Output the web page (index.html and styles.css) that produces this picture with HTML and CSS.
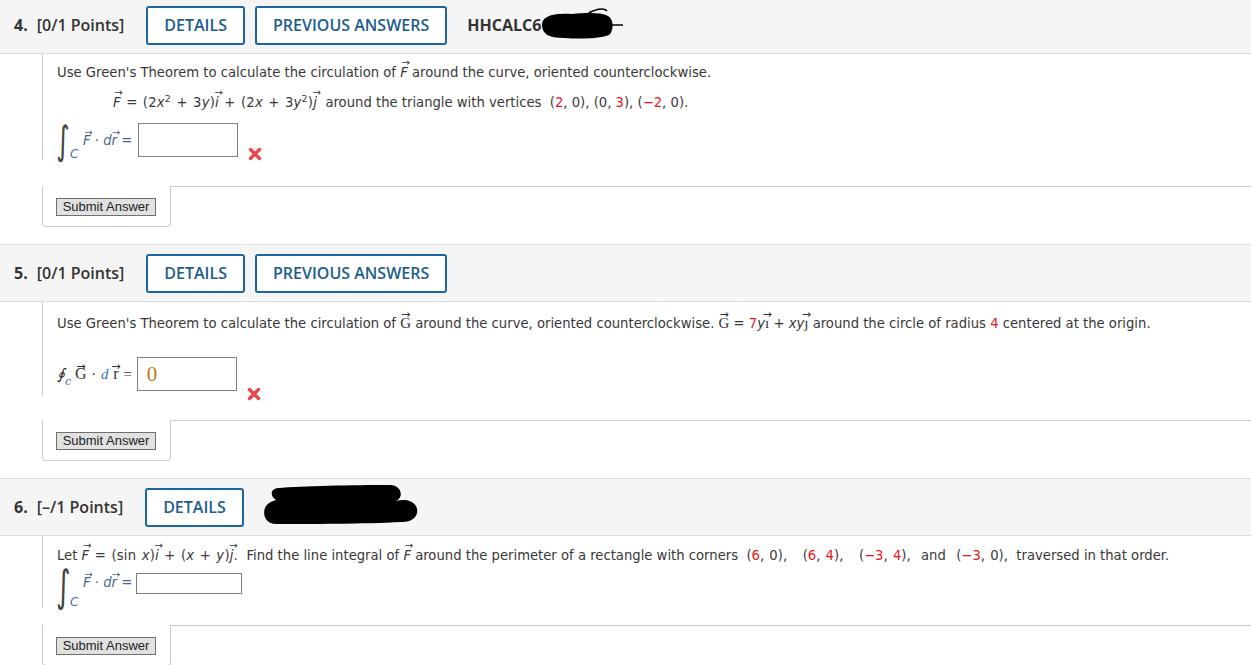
FILE: index.html
```html
<!DOCTYPE html>
<html>
<head>
<meta charset="utf-8">
<title>Questions</title>
<link rel="stylesheet" href="styles.css">
</head>
<body>
<div class="page">

  <section class="q">
    <div class="qhead">
      <span class="qnum">4.</span><span class="pts">[0/1 Points]</span>
      <span class="btn">DETAILS</span>
      <span class="btn">PREVIOUS ANSWERS</span>
      <span class="code">HHCALC6</span>
      <svg class="redact1" width="84" height="34" viewBox="0 0 84 34">
        <path d="M2,18 C2,8 16,6 32,7 C46,6 60,5 68,9 C74,12 74,24 69,28 C58,32 40,32 24,31 C9,31 2,27 2,18 Z" fill="#000"/>
        <path d="M66,18 L83,18" stroke="#000" stroke-width="1.5"/>
        <path d="M46,8 C54,2 64,0 67,4" stroke="#000" stroke-width="1.5" fill="none"/>
      </svg>
    </div>
    <div class="qbody">
      <div class="content c4">
        <p class="line1">Use Green's Theorem to calculate the circulation of <span class="v it">F</span> around the curve, oriented counterclockwise.</p>
        <p class="line2"><span class="m"><span class="v it">F</span> = (2<i>x</i><sup>2</sup> + 3<i>y</i>)<span class="v it">i</span> + (2<i>x</i> + 3<i>y</i><sup>2</sup>)<span class="v it">j</span></span> &nbsp;around the triangle with vertices &nbsp;(<span class="red">2</span>, 0), (0, <span class="red">3</span>), (<span class="red">−2</span>, 0).</p>
        <div class="ans ans4">
          <span class="intg"><span class="isym">∫</span><span class="isub">C</span></span>
          <span class="expr"><span class="v it">F</span> · <i>d</i><span class="v it">r</span> =</span>
          <span class="box b4"></span>
          <svg class="xmark" width="14" height="14" viewBox="0 0 14 14"><path d="M2.5,2.5 L11.5,11.5 M11.5,2.5 L2.5,11.5" stroke="#e8474c" stroke-width="3.4" stroke-linecap="round"/></svg>
        </div>
      </div>
      <div class="foot">
        <div class="subcell"><button class="submit">Submit Answer</button></div>
        <div class="rest"></div>
      </div>
    </div>
  </section>

  <section class="q">
    <div class="qhead">
      <span class="qnum">5.</span><span class="pts">[0/1 Points]</span>
      <span class="btn">DETAILS</span>
      <span class="btn">PREVIOUS ANSWERS</span>
    </div>
    <div class="qbody">
      <div class="content c5">
        <p class="line1">Use Green's Theorem to calculate the circulation of <span class="sv">G</span> around the curve, oriented counterclockwise. <span class="sv">G</span> = <span class="red">7</span><i>y</i><span class="sv">ı</span> + <i>xy</i><span class="sv">ȷ</span> around the circle of radius <span class="red">4</span> centered at the origin.</p>
        <div class="ans ans5">
          <span class="oint">∮<span class="csub">c</span></span>
          <span class="serif"><span class="sv">G</span> · <i class="blue">d</i> <span class="sv">r</span> =</span>
          <span class="box b5"><span class="val">0</span></span>
          <svg class="xmark" width="14" height="14" viewBox="0 0 14 14"><path d="M2.5,2.5 L11.5,11.5 M11.5,2.5 L2.5,11.5" stroke="#e8474c" stroke-width="3.4" stroke-linecap="round"/></svg>
        </div>
      </div>
      <div class="foot">
        <div class="subcell"><button class="submit">Submit Answer</button></div>
        <div class="rest"></div>
      </div>
    </div>
  </section>

  <section class="q">
    <div class="qhead">
      <span class="qnum">6.</span><span class="pts">[–/1 Points]</span>
      <span class="btn">DETAILS</span>
      <svg class="redact2" width="158" height="42" viewBox="0 0 158 42">
        <path d="M16,4 C40,2 90,1 128,1 C140,1 142,14 134,17 C142,15 150,16 154,22 C158,30 152,38 140,38 C100,40 50,40 14,40 C2,40 0,28 4,22 C6,19 10,17 14,16 C8,12 8,5 16,4 Z" fill="#000"/>
      </svg>
    </div>
    <div class="qbody">
      <div class="content c6">
        <p class="line1">Let <span class="m"><span class="v it">F</span> = (sin <i>x</i>)<span class="v it">i</span> + (<i>x</i> + <i>y</i>)<span class="v it">j</span>.</span> &nbsp;Find the line integral of <span class="v it">F</span> around the perimeter of a rectangle with corners &nbsp;<span class="m2">(<span class="red">6</span>, 0), &nbsp; (<span class="red">6</span>, <span class="red">4</span>), &nbsp; (<span class="red">−3</span>, <span class="red">4</span>), &nbsp;and &nbsp;(<span class="red">−3</span>, 0),</span> &nbsp;traversed in that order.</p>
        <div class="ans ans6">
          <span class="intg tall"><span class="isym">∫</span><span class="isub">C</span></span>
          <span class="expr"><span class="v it">F</span> · <i>d</i><span class="v it">r</span> =</span>
          <span class="box b6"></span>
        </div>
      </div>
      <div class="foot">
        <div class="subcell"><button class="submit">Submit Answer</button></div>
        <div class="rest"></div>
      </div>
    </div>
  </section>

</div>
</body>
</html>
```

FILE: styles.css
```css
html, body {
  margin: 0;
  padding: 0;
  background: #ffffff;
}

body {
  font-family: "DejaVu Sans", Verdana, sans-serif;
  color: #383838;
}

.page {
  margin-top: -4px;
}

.q + .q {
  margin-top: 17px;
}

/* ---------- header bar ---------- */
.qhead {
  display: flex;
  align-items: center;
  height: 56px;
  background: #f5f5f5;
  border-top: 1px solid #dedede;
  border-bottom: 1px solid #dedede;
  padding-left: 14px;
  font-family: "Open Sans", "Noto Sans", sans-serif;
  color: #333;
}

.qnum {
  font-size: 16px;
  font-weight: 700;
  margin-right: 9px;
}

.pts {
  font-size: 16px;
  font-weight: 600;
  margin-right: 22px;
}

.btn {
  display: flex;
  align-items: center;
  box-sizing: border-box;
  height: 39px;
  padding: 0 16px;
  border: 2px solid #1b66a0;
  border-radius: 3px;
  background: #ffffff;
  color: #1d5d8e;
  font-size: 16px;
  font-weight: 600;
  margin-right: 10px;
}

.code {
  margin-left: 10px;
  font-size: 16px;
  font-weight: 700;
  color: #333;
}

.redact1 {
  margin-left: -1px;
  margin-top: -2px;
}

.redact2 {
  margin-left: 8px;
  margin-top: -4px;
}

/* ---------- body ---------- */
.qbody {
  margin-left: 42px;
}

.content {
  border-left: 1px solid #cccccc;
  padding-left: 14px;
  font-size: 13.2px;
}

.content p {
  margin: 0;
}

.m {
  letter-spacing: 0.2px;
  word-spacing: 1px;
}

.m2 {
  word-spacing: 1px;
}

.c4 {
  padding-top: 9px;
}

.c4 .line1 {
  line-height: 20px;
}

.c4 .line2 {
  margin-top: 10px;
  padding-left: 56px;
  line-height: 20px;
}

.c5 {
  padding-top: 11px;
}

.c5 .line1 {
  line-height: 20px;
}

.c6 {
  padding-top: 10px;
}

.c6 .line1 {
  line-height: 20px;
}

i, .it {
  font-style: italic;
}

sup {
  font-size: 9.5px;
  line-height: 0;
  vertical-align: 5px;
}

.red {
  color: #e8161b;
}

/* vector arrow over a sans letter */
.v {
  position: relative;
  display: inline-block;
}

.v::after {
  content: "\2192";
  position: absolute;
  left: 50%;
  top: -5px;
  transform: translateX(-30%);
  font-size: 10px;
  font-style: normal;
  letter-spacing: 0;
  line-height: 1;
}

/* serif vector letters */
.sv {
  position: relative;
  display: inline-block;
  font-family: "Liberation Serif", "DejaVu Serif", serif;
  font-size: 15px;
  font-style: normal;
  color: #333;
}

.sv::after {
  content: "\2192";
  position: absolute;
  left: 50%;
  top: -4px;
  transform: translateX(-50%);
  font-family: "DejaVu Sans", sans-serif;
  font-size: 11px;
  line-height: 1;
}

/* ---------- answer rows ---------- */
.ans {
  display: flex;
  align-items: center;
}

.ans4 {
  margin-top: 7px;
  height: 40px;
}

.intg {
  position: relative;
  display: inline-block;
  width: 26px;
  height: 36px;
  flex: none;
}

.isym {
  position: absolute;
  left: -1px;
  top: 50%;
  font-family: "DejaVu Sans", sans-serif;
  font-size: 26px;
  line-height: 1;
  color: #444;
  transform: translateY(-50%) scaleY(1.5);
}

.isub {
  position: absolute;
  left: 13px;
  bottom: -2px;
  font-size: 12px;
  font-style: italic;
  color: #3e6fa3;
  line-height: 1;
}

.expr {
  margin-right: 6px;
  color: #4a6788;
  font-size: 13.2px;
}

.box {
  display: inline-block;
  box-sizing: border-box;
  border: 1px solid #808080;
  background: #fff;
  flex: none;
}

.b4 {
  width: 100px;
  height: 34px;
}

.xmark {
  align-self: flex-start;
  margin-top: 27px;
  margin-left: 10px;
}

.ans5 {
  margin-top: 18px;
  height: 44px;
}

.ans5 .xmark {
  margin-top: 35px;
}

.oint {
  position: relative;
  display: inline-block;
  width: 16px;
  font-family: "DejaVu Serif", serif;
  font-style: italic;
  font-size: 15px;
  color: #222;
}

.csub {
  position: absolute;
  left: 8px;
  bottom: -5px;
  font-size: 11px;
  font-style: italic;
  color: #3e6fa3;
}

.serif {
  font-family: "Liberation Serif", serif;
  font-size: 15px;
  color: #333;
  margin-right: 5px;
  margin-left: 2px;
  word-spacing: 1px;
}

.serif .sv {
  font-size: 16px;
}

.blue {
  color: #3e6fa3;
}

.b5 {
  width: 100px;
  height: 34px;
  display: flex;
  align-items: center;
}

.val {
  margin-left: 9px;
  font-family: "Liberation Serif", serif;
  font-size: 21px;
  color: #c27a1c;
}

.ans6 {
  margin-top: 0;
  height: 42px;
  align-items: flex-start;
}

.intg.tall {
  height: 42px;
}

.intg.tall .isym {
  font-size: 28px;
  transform: translateY(-50%) scaleY(1.55);
}

.intg.tall .isub {
  bottom: 0px;
}

.ans6 .expr {
  margin-top: 9px;
  line-height: 15px;
  margin-right: 4px;
}

.b6 {
  width: 106px;
  height: 21px;
  margin-top: 7px;
}

/* ---------- footer ---------- */
.foot {
  display: flex;
}

.c4 + .foot {
  margin-top: 26px;
}

.c5 + .foot {
  margin-top: 24px;
}

.c6 + .foot {
  margin-top: 17px;
}

.subcell {
  box-sizing: border-box;
  width: 129px;
  height: 41px;
  border: 1px solid #cccccc;
  border-top: none;
  border-radius: 0 0 4px 4px;
  padding: 12px 0 0 13px;
}

.rest {
  flex: 1;
  border-top: 1px solid #cccccc;
}

.submit {
  display: block;
  box-sizing: border-box;
  width: 100px;
  height: 18px;
  padding: 0;
  margin: 0;
  border: 1px solid #707070;
  border-radius: 0;
  background: #e1e1e1;
  font-family: "Liberation Sans", Arial, sans-serif;
  font-size: 13px;
  line-height: 16px;
  color: #222;
}
```
